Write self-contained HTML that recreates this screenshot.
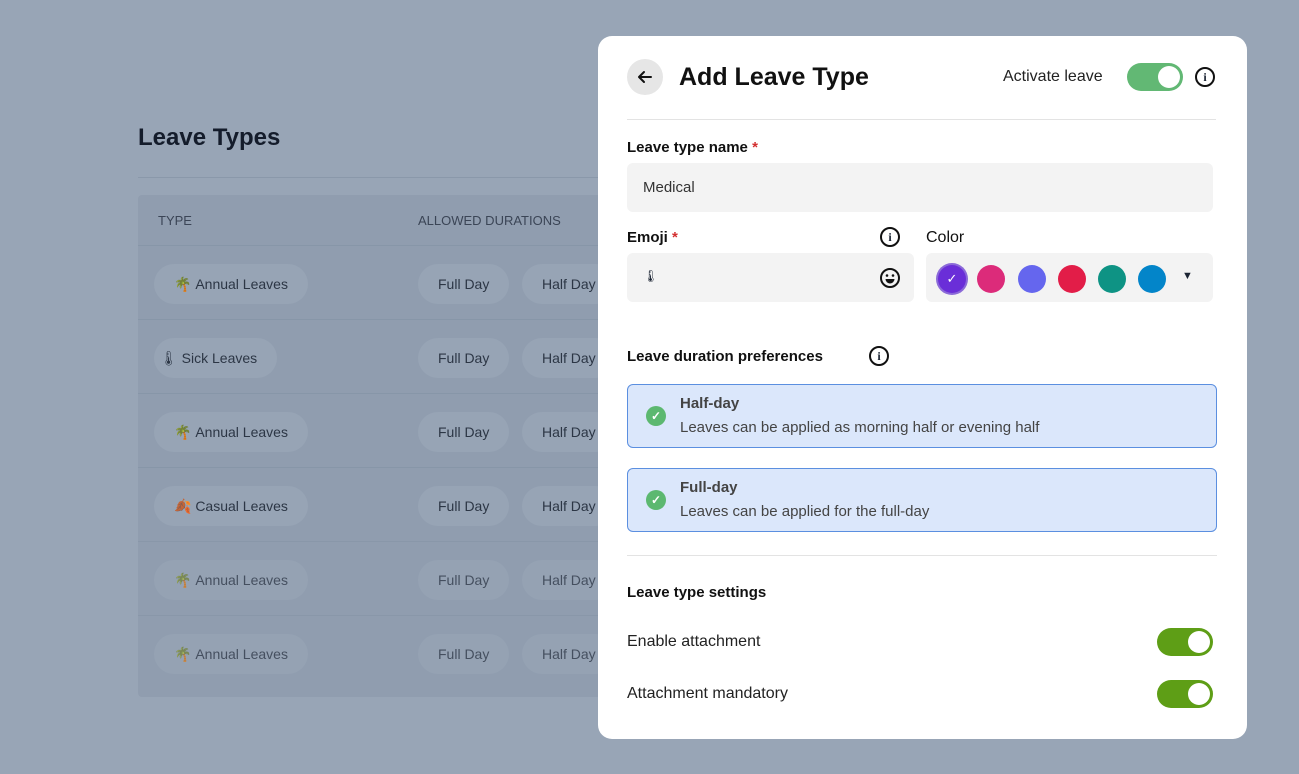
<!DOCTYPE html>
<html><head><meta charset="utf-8"><style>
*{box-sizing:border-box;margin:0;padding:0}
body{width:1299px;height:774px;background:#98a5b6;font-family:"Liberation Sans",sans-serif;position:relative;overflow:hidden;color:#1b2433}
.abs{position:absolute}
.tbl{left:138px;top:195px;width:470px;height:502px;background:#909daf;border-radius:4px}
.row{position:absolute;left:0;width:470px;height:74px;border-top:1px solid #8796a8}
.pill{position:absolute;height:40px;border-radius:20px;background:#97a4b5;font-size:14px;color:#2c3645;display:flex;align-items:center;padding:0 20px;white-space:nowrap}
.modal{left:598px;top:36px;width:649px;height:703px;background:#fff;border-radius:14px}
.lbl{font-size:15px;font-weight:bold;color:#111}
.req{color:#d32f2f}
.inp{background:#f3f3f3;border-radius:6px}
.tog{width:56px;height:28px;border-radius:14px;position:absolute}
.tog::after{content:"";position:absolute;right:3px;top:3px;width:22px;height:22px;border-radius:50%;background:#fff}
.dot{position:absolute;top:12px;width:28px;height:28px;border-radius:50%}
.opt{position:absolute;left:29px;width:590px;height:64px;background:#dbe7fb;border:1px solid #5b8fe0;border-radius:6px}
.opt .t{position:absolute;left:52px;top:10px;font-size:15px;font-weight:bold;color:#444}
.opt .d{position:absolute;left:52px;top:34px;font-size:15px;color:#444}
.opt .c{position:absolute;left:18px;top:21px;width:20px;height:20px;border-radius:50%;background:#5cb870;color:#fff;font-size:12px;text-align:center;line-height:20px;font-weight:bold}
.info{position:absolute;width:20px;height:20px;border:2px solid #111;border-radius:50%;font-size:12px;font-weight:bold;text-align:center;line-height:16px;font-family:"Liberation Serif",serif}
</style></head><body>
<div class="abs" style="left:138px;top:124px;font-size:24px;font-weight:bold;color:#141c2b">Leave Types</div>
<div class="abs" style="left:138px;top:177px;width:470px;height:1px;background:#8a98aa"></div>
<div class="abs tbl">
 <div class="abs" style="left:20px;top:18px;font-size:13px;color:#3b4556">TYPE</div>
 <div class="abs" style="left:280px;top:18px;font-size:13px;color:#3b4556">ALLOWED DURATIONS</div>
 <div class="row" style="top:50px"><div class="pill" style="left:16px;top:18px">🌴&nbsp;Annual Leaves</div><div class="pill" style="left:280px;top:18px">Full Day</div><div class="pill" style="left:384px;top:18px">Half Day</div></div>
 <div class="row" style="top:124px"><div class="pill" style="left:16px;top:18px;padding-left:6px">🌡&nbsp;Sick Leaves</div><div class="pill" style="left:280px;top:18px">Full Day</div><div class="pill" style="left:384px;top:18px">Half Day</div></div>
 <div class="row" style="top:198px"><div class="pill" style="left:16px;top:18px">🌴&nbsp;Annual Leaves</div><div class="pill" style="left:280px;top:18px">Full Day</div><div class="pill" style="left:384px;top:18px">Half Day</div></div>
 <div class="row" style="top:272px"><div class="pill" style="left:16px;top:18px">🍂&nbsp;Casual Leaves</div><div class="pill" style="left:280px;top:18px">Full Day</div><div class="pill" style="left:384px;top:18px">Half Day</div></div>
 <div class="row" style="top:346px;opacity:.75"><div class="pill" style="left:16px;top:18px">🌴&nbsp;Annual Leaves</div><div class="pill" style="left:280px;top:18px">Full Day</div><div class="pill" style="left:384px;top:18px">Half Day</div></div>
 <div class="row" style="top:420px;opacity:.75"><div class="pill" style="left:16px;top:18px">🌴&nbsp;Annual Leaves</div><div class="pill" style="left:280px;top:18px">Full Day</div><div class="pill" style="left:384px;top:18px">Half Day</div></div>
</div>

<div class="abs modal">
 <div class="abs" style="left:29px;top:23px;width:36px;height:36px;border-radius:50%;background:#e6e6e6"><svg width="36" height="36" viewBox="0 0 36 36"><path d="M24 18H12M17 13l-5 5 5 5" stroke="#111" stroke-width="2" fill="none" stroke-linecap="round" stroke-linejoin="round"/></svg></div>
 <div class="abs" style="left:81px;top:27px;font-size:25px;font-weight:bold;color:#111">Add Leave Type</div>
 <div class="abs" style="left:405px;top:32px;font-size:16px;color:#222">Activate leave</div>
 <div class="tog" style="left:529px;top:27px;background:#62b874"></div>
 <div class="info" style="left:597px;top:31px">i</div>
 <div class="abs" style="left:29px;top:83px;width:589px;height:1px;background:#e3e3e3"></div>

 <div class="abs lbl" style="left:29px;top:103px">Leave type name <span class="req">*</span></div>
 <div class="abs inp" style="left:29px;top:127px;width:586px;height:49px"><div class="abs" style="left:16px;top:16px;font-size:15px;color:#333">Medical</div></div>

 <div class="abs lbl" style="left:29px;top:193px">Emoji <span class="req">*</span></div>
 <div class="info" style="left:282px;top:191px">i</div>
 <div class="abs lbl" style="left:328px;top:193px;font-weight:normal;font-size:16px">Color</div>
 <div class="abs inp" style="left:29px;top:217px;width:287px;height:49px"><div class="abs" style="left:16px;top:16px;font-size:12px">🌡</div>
  <svg class="abs" style="left:252px;top:14px" width="22" height="22" viewBox="0 0 22 22"><circle cx="11" cy="11" r="9" stroke="#111" stroke-width="2" fill="none"/><circle cx="8" cy="8.5" r="1.3" fill="#111"/><circle cx="14" cy="8.5" r="1.3" fill="#111"/><path d="M6.5 12h9a4.5 4.5 0 0 1-9 0z" fill="#111"/></svg></div>
 <div class="abs inp" style="left:328px;top:217px;width:287px;height:49px">
  <div class="dot" style="left:12px;background:#6a2ed8;box-shadow:0 0 0 2px #8b6ad8;color:#fff;font-size:13px;text-align:center;line-height:28px">✓</div>
  <div class="dot" style="left:51px;background:#dc2b7a"></div>
  <div class="dot" style="left:92px;background:#6566ee"></div>
  <div class="dot" style="left:132px;background:#e21d48"></div>
  <div class="dot" style="left:172px;background:#0e9384"></div>
  <div class="dot" style="left:212px;background:#0385c9"></div>
  <div class="abs" style="left:256px;top:17px;font-size:11px">▼</div>
 </div>

 <div class="abs lbl" style="left:29px;top:312px">Leave duration preferences</div>
 <div class="info" style="left:271px;top:310px">i</div>
 <div class="opt" style="top:348px"><div class="c">✓</div><div class="t">Half-day</div><div class="d">Leaves can be applied as morning half or evening half</div></div>
 <div class="opt" style="top:432px"><div class="c">✓</div><div class="t">Full-day</div><div class="d">Leaves can be applied for the full-day</div></div>
 <div class="abs" style="left:29px;top:519px;width:590px;height:1px;background:#e3e3e3"></div>

 <div class="abs lbl" style="left:29px;top:548px">Leave type settings</div>
 <div class="abs" style="left:29px;top:597px;font-size:16px;color:#222">Enable attachment</div>
 <div class="tog" style="left:559px;top:592px;background:#5e9e16"></div>
 <div class="abs" style="left:29px;top:649px;font-size:16px;color:#222">Attachment mandatory</div>
 <div class="tog" style="left:559px;top:644px;background:#5e9e16"></div>
</div>
</body></html>
